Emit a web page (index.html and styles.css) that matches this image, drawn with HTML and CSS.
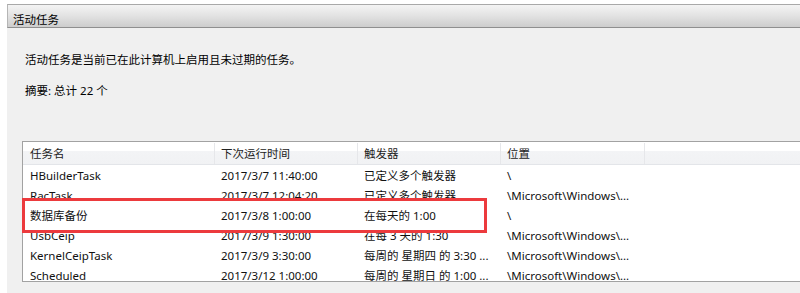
FILE: index.html
```
<!DOCTYPE html>
<html lang="zh-CN">
<head>
<meta charset="utf-8">
<title>活动任务</title>
<link rel="stylesheet" href="styles.css">
</head>
<body>
<div class="panel">
  <div class="titlebar">活动任务</div>
  <div class="content">
    <p class="desc">活动任务是当前已在此计算机上启用且未过期的任务。</p>
    <p class="summary">摘要: 总计 22 个</p>
    <div class="list-area">
      <div class="list">
        <div class="row head">
          <div class="cell">任务名</div>
          <div class="cell">下次运行时间</div>
          <div class="cell">触发器</div>
          <div class="cell">位置</div>
          <div class="cell"></div>
        </div>
        <div class="row">
          <div class="cell">HBuilderTask</div>
          <div class="cell">2017/3/7 11:40:00</div>
          <div class="cell">已定义多个触发器</div>
          <div class="cell">\</div>
          <div class="cell"></div>
        </div>
        <div class="row">
          <div class="cell">RacTask</div>
          <div class="cell">2017/3/7 12:04:20</div>
          <div class="cell">已定义多个触发器</div>
          <div class="cell">\Microsoft\Windows\...</div>
          <div class="cell"></div>
        </div>
        <div class="row">
          <div class="cell">数据库备份</div>
          <div class="cell">2017/3/8 1:00:00</div>
          <div class="cell">在每天的 1:00</div>
          <div class="cell">\</div>
          <div class="cell"></div>
        </div>
        <div class="row">
          <div class="cell">UsbCeip</div>
          <div class="cell">2017/3/9 1:30:00</div>
          <div class="cell">在每 3 天的 1:30</div>
          <div class="cell">\Microsoft\Windows\...</div>
          <div class="cell"></div>
        </div>
        <div class="row">
          <div class="cell">KernelCeipTask</div>
          <div class="cell">2017/3/9 3:30:00</div>
          <div class="cell">每周的 星期四 的 3:30 ...</div>
          <div class="cell">\Microsoft\Windows\...</div>
          <div class="cell"></div>
        </div>
        <div class="row">
          <div class="cell">Scheduled</div>
          <div class="cell">2017/3/12 1:00:00</div>
          <div class="cell">每周的 星期日 的 1:00 ...</div>
          <div class="cell">\Microsoft\Windows\...</div>
          <div class="cell"></div>
        </div>
      </div>
      <div class="highlight"></div>
    </div>
  </div>
</div>
</body>
</html>
```
FILE: styles.css
```
html, body {
  margin: 0;
  padding: 0;
  background: #ffffff;
}
body {
  font-family: "Noto Sans", "Noto Sans CJK SC", sans-serif;
  font-size: 11.5px;
  color: #000000;
  height: 293px;
  overflow: hidden;
}
.panel {
  margin: 4px 0 0 7px;
  background: #f0f0f0;
  height: 289px;
  overflow: hidden;
}
.titlebar {
  height: 22px;
  border-top: 1px solid #a9a9a9;
  border-bottom: 1px solid #8f8f8f;
  border-left: 1px solid #b5b5b5;
  background: linear-gradient(#f4f4f4 0%, #e4e4e4 45%, #cdcdcd 100%);
  padding-left: 5px;
  line-height: 29px;
  color: #000;
}
.content {
  padding: 24px 0 0 18px;
}
.desc, .summary {
  margin: 0;
  line-height: 16px;
  height: 16px;
}
.summary {
  margin-top: 15px;
}
.list-area {
  position: relative;
  margin: 42px -30px 0 -3px;
}
.list {
  height: 139px;
  border: 1px solid #a2a2a2;
  border-right: none;
  background: #ffffff;
  overflow: hidden;
}
.row {
  display: grid;
  grid-template-columns: 192px 143px 143px 144px 1fr;
  height: 20px;
  line-height: 22px;
  white-space: nowrap;
  color: #111;
}
.row .cell {
  padding-left: 7px;
  overflow: hidden;
}
.row .cell:nth-child(n+2) {
  padding-left: 6px;
}
.row.head {
  height: 22px;
  border-bottom: 1px solid #e3e5e9;
  background: linear-gradient(#ffffff 0%, #ffffff 42%, #f3f4f6 42%, #f1f2f4 100%);
  color: #222;
}
.row.head .cell {
  border-right: 1px solid #e6e7ea;
  margin-top: 1px;
  height: 21px;
  line-height: 22px;
}
.row.head .cell:last-child {
  border-right: none;
}
.highlight {
  position: absolute;
  left: 0;
  top: 57px;
  width: 465px;
  height: 35px;
  box-sizing: border-box;
  border: 3px solid #ec3a3d;
}
```
